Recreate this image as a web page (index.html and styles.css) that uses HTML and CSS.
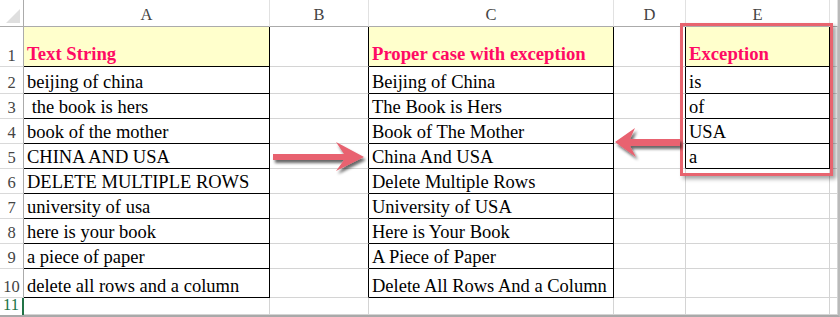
FILE: index.html
```html
<!DOCTYPE html>
<html>
<head>
<meta charset="utf-8">
<link rel="stylesheet" href="styles.css">
</head>
<body>
<div class="frame">
  <div class="sheet">
    <div class="corner"><span class="tri"></span></div>
    <div class="ch">A</div><div class="ch">B</div><div class="ch">C</div><div class="ch">D</div><div class="ch">E</div><div class="ch ch-last"></div>

    <div class="rh">1</div>
    <div class="c ta hd">Text String</div><div class="c tb"></div><div class="c ta hd">Proper case with exception</div><div class="c tb"></div><div class="c ta hd">Exception</div><div class="c"></div>

    <div class="rh">2</div>
    <div class="c ta">beijing of china</div><div class="c tb"></div><div class="c ta">Beijing of China</div><div class="c tb"></div><div class="c ta">is</div><div class="c"></div>

    <div class="rh">3</div>
    <div class="c ta pre"> the book is hers</div><div class="c tb"></div><div class="c ta">The Book is Hers</div><div class="c tb"></div><div class="c ta">of</div><div class="c"></div>

    <div class="rh">4</div>
    <div class="c ta">book of the mother</div><div class="c tb"></div><div class="c ta">Book of The Mother</div><div class="c tb"></div><div class="c ta">USA</div><div class="c"></div>

    <div class="rh">5</div>
    <div class="c ta">CHINA AND USA</div><div class="c tb"></div><div class="c ta">China And USA</div><div class="c tb"></div><div class="c ta">a</div><div class="c"></div>

    <div class="rh">6</div>
    <div class="c ta">DELETE MULTIPLE ROWS</div><div class="c tb"></div><div class="c ta">Delete Multiple Rows</div><div class="c"></div><div class="c"></div><div class="c"></div>

    <div class="rh">7</div>
    <div class="c ta">university of usa</div><div class="c tb"></div><div class="c ta">University of USA</div><div class="c"></div><div class="c"></div><div class="c"></div>

    <div class="rh">8</div>
    <div class="c ta">here is your book</div><div class="c tb"></div><div class="c ta">Here is Your Book</div><div class="c"></div><div class="c"></div><div class="c"></div>

    <div class="rh">9</div>
    <div class="c ta">a piece of paper</div><div class="c tb"></div><div class="c ta">A Piece of Paper</div><div class="c"></div><div class="c"></div><div class="c"></div>

    <div class="rh">10</div>
    <div class="c ta">delete all rows and a column</div><div class="c tb"></div><div class="c ta">Delete All Rows And a Column</div><div class="c"></div><div class="c"></div><div class="c"></div>

    <div class="rh rh-sel">11</div>
    <div class="c"></div><div class="c"></div><div class="c"></div><div class="c"></div><div class="c"></div><div class="c"></div>
  </div>

  <div class="highlight"></div>

  <svg class="arrows" width="840" height="317" viewBox="0 0 840 317" xmlns="http://www.w3.org/2000/svg">
    <defs>
      <filter id="sh" x="-20%" y="-50%" width="140%" height="200%">
        <feGaussianBlur in="SourceAlpha" stdDeviation="1.6"/>
        <feOffset dx="2" dy="3" result="b"/>
        <feComponentTransfer><feFuncA type="linear" slope="0.6"/></feComponentTransfer>
        <feMerge><feMergeNode/><feMergeNode in="SourceGraphic"/></feMerge>
      </filter>
    </defs>
    <polygon filter="url(#sh)" fill="#e8626f" points="273,154 344,154 336,142 364,157 336,171 344,160 273,160"/>
    <polygon filter="url(#sh)" fill="#e8626f" points="680,139 630,139 635,128 615,142 636,157 630,146 680,146"/>
  </svg>
</div>
</body>
</html>
```

FILE: styles.css
```css
* { box-sizing: border-box; }
html, body { margin: 0; padding: 0; background: #fff; }

.frame {
  position: relative;
  width: 840px;
  height: 317px;
  overflow: hidden;
  border-right: 2px solid #b9b9b9;
  border-bottom: 2px solid #a9a9a9;
}

.sheet {
  display: grid;
  grid-template-columns: 24px 246px 99px 245px 72px 144px 8px;
  grid-template-rows: 27px 40px 27px repeat(7, 25px) 29px 17px;
  font-family: "Liberation Serif", "Times New Roman", serif;
}

.corner {
  position: relative;
  border-right: 1px solid #ababab;
  border-bottom: 1px solid #ababab;
}
.tri {
  position: absolute;
  right: 3px;
  bottom: 3px;
  width: 0;
  height: 0;
  border-left: 14px solid transparent;
  border-bottom: 14px solid #dfdfdf;
}

.ch {
  display: flex;
  align-items: center;
  justify-content: center;
  border-right: 1px solid #e1e1e1;
  border-bottom: 1px solid #ababab;
  color: #444;
  font-size: 16.5px;
  padding-top: 3px;
}

.rh {
  display: flex;
  align-items: flex-end;
  justify-content: center;
  border-right: 1px solid #ababab;
  border-bottom: 1px solid #d9d9d9;
  color: #444;
  font-size: 16.5px;
  line-height: 1;
  padding-bottom: 2px;
}
.rh-sel {
  color: #217346;
  border-right: 2px solid #217346;
  border-bottom: none;
}

.c {
  display: flex;
  align-items: flex-end;
  border-right: 1px solid #d4d4d4;
  border-bottom: 1px solid #d4d4d4;
  padding: 0 0 2px 3px;
  font-size: 18.5px;
  line-height: 1;
  color: #000;
  white-space: nowrap;
  overflow: hidden;
}
.pre { white-space: pre; }

.ta {
  border-right: 1px solid #000;
  border-bottom: 1px solid #000;
}
.tb {
  border-right: 1px solid #000;
}

.hd {
  background: #ffffcc;
  color: #ff0a64;
  font-weight: bold;
  font-size: 18.7px;
}

.highlight {
  position: absolute;
  left: 680px;
  top: 23px;
  width: 153px;
  height: 153px;
  border: 3px solid #e8646f;
  box-shadow: 3px 3px 4px rgba(0, 0, 0, 0.35);
}

.arrows {
  position: absolute;
  left: 0;
  top: 0;
  pointer-events: none;
}
```
